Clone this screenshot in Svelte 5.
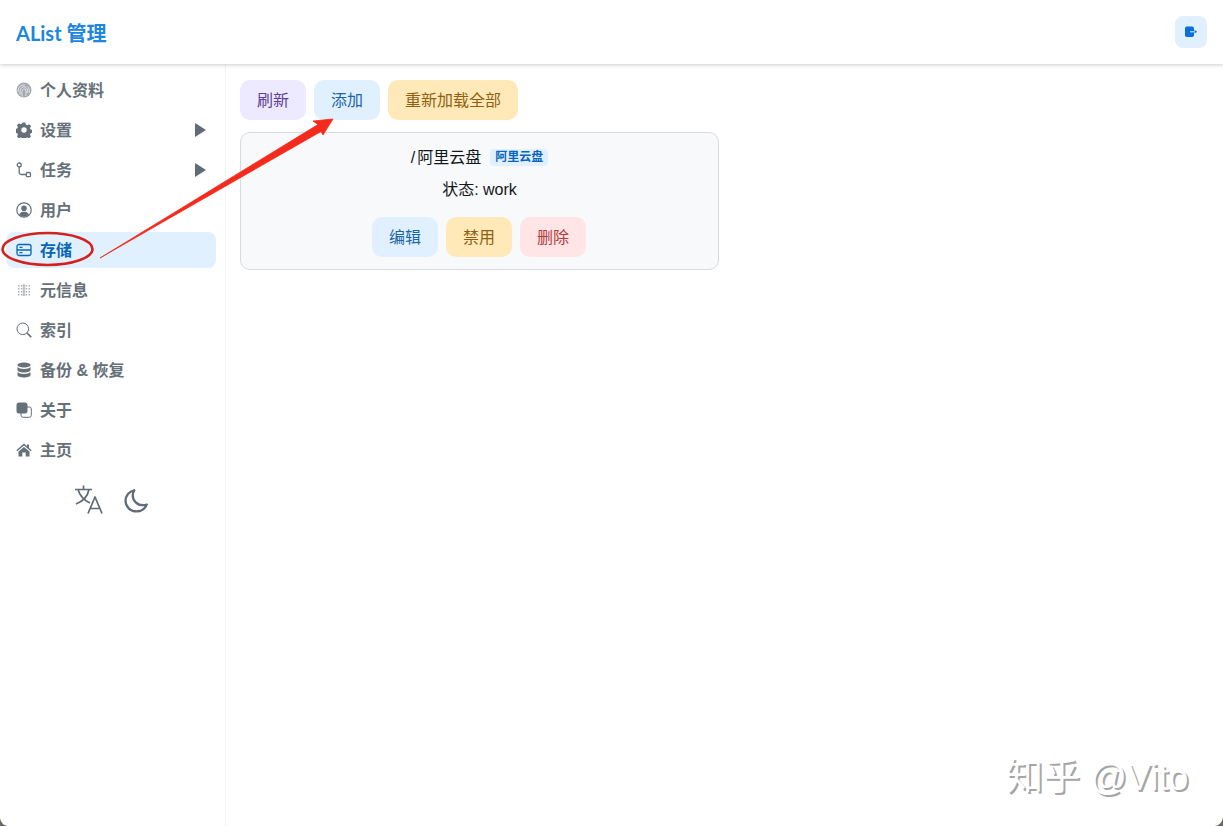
<script>
  const items = [
    { label: '个人资料', icon: 'finger' },
    { label: '设置', icon: 'gear', arrow: true },
    { label: '任务', icon: 'route', arrow: true },
    { label: '用户', icon: 'user' },
    { label: '存储', icon: 'storage', active: true },
    { label: '元信息', icon: 'meta' },
    { label: '索引', icon: 'search' },
    { label: '备份 & 恢复', icon: 'db' },
    { label: '关于', icon: 'copy' },
    { label: '主页', icon: 'home' }
  ];
</script>

<div class="page">
  <header class="top">
    <span class="brand">AList 管理</span>
    <button class="logout" aria-label="退出">
      <svg width="14" height="14" viewBox="0 0 14 14"><rect x="1" y="1.500" width="9" height="10.500" rx="1.800" fill="#0a6fd8"/><path d="M10.500 5v3.600L13.200 6.800z" fill="#0a6fd8"/><path d="M6 6.800h4.500" stroke="#e1f0ff" stroke-width="1"/></svg>
    </button>
  </header>

  <div class="body">
    <aside class="side">
      <nav class="nav">
        {#each items as it}
          <div class="item" class:active={it.active}>
            <svg class="ico" viewBox="0 0 16 16" width="16" height="16">
              {#if it.icon === 'finger'}
                <circle cx="8" cy="8" r="7.500" fill="currentColor" opacity=".6"/>
                <g fill="none" stroke="#fff" stroke-width=".8" opacity=".9">
                  <path d="M2 10c0-6 4-7.500 7-7M4.200 12.800c-1-5 1-8 3.800-8s3.800 2.500 3.300 6M6.500 14.500c-1-3-1-7 1.500-7.500s2.200 3.500 1.700 7M13.200 11c.3-3 0-5-1.500-6.500"/>
                </g>
              {:else if it.icon === 'gear'}
                <path fill="currentColor" fill-rule="evenodd" d="M6.600 0.500h2.800l.4 2 1.500.7 1.800-1 2 2-1.100 1.800.6 1.400 2 .5v2.800l-2 .5-.6 1.500 1 1.700-2 2-1.700-1-1.500.6-.4 2H6.600l-.5-2-1.400-.6-1.800 1-2-2 1-1.700-.6-1.500-2-.5V6.900l2-.5.6-1.400-1-1.800 2-2 1.800 1 1.400-.7zM8 5.300a2.700 2.700 0 1 0 0 5.400 2.700 2.700 0 0 0 0-5.400z"/>
              {:else if it.icon === 'route'}
                <g fill="none" stroke="currentColor" stroke-width="1.300"><circle cx="3.200" cy="3" r="2"/><rect x="10.300" y="10.500" width="4.200" height="4.200" rx="1.200"/><path d="M3.200 5v5.500a2 2 0 0 0 2 2h5"/></g>
              {:else if it.icon === 'user'}
                <circle cx="8" cy="8" r="7.200" fill="none" stroke="currentColor" stroke-width="1.200"/><circle cx="8" cy="6.300" r="2.800" fill="currentColor"/><path d="M3 12.700c1-2.500 3-3 5-3s4 .5 5 3a7 7 0 0 1-10 0z" fill="currentColor"/>
              {:else if it.icon === 'storage'}
                <g fill="none" stroke="currentColor" stroke-width="1.300"><rect x="1" y="2.500" width="14" height="11" rx="2"/><path d="M1 8h14M3.500 5.300h3M3.500 10.700h3"/></g>
              {:else if it.icon === 'meta'}
                <g fill="currentColor" opacity=".55"><path d="M2 3h1.500v1.500H2zM5 3h1.500v1.500H5zM9.500 3H11v1.500H9.500zM12.500 3H14v1.500h-1.500zM2 6h1.500v1.500H2zM5 6h1.500v1.500H5zM7.200 2h1.500v12H7.200zM9.500 6H11v1.500H9.500zM12.500 6H14v1.500h-1.500zM2 9h1.500v1.500H2zM5 9h1.500v1.500H5zM9.500 9H11v1.500H9.500zM12.500 9H14v1.500h-1.500zM2 12h1.500v1.500H2zM5 12h1.500v1.500H5zM9.500 12H11v1.500H9.500zM12.500 12H14v1.500h-1.500z"/></g>
              {:else if it.icon === 'search'}
                <g fill="none" stroke="currentColor"><circle cx="6.800" cy="6.800" r="5.800" stroke-width="1"/><path d="M11 11l4.200 4.200" stroke-width="1.700"/></g>
              {:else if it.icon === 'db'}
                <g fill="currentColor"><path d="M1.500 3c0-1.500 3-2.500 6.500-2.500S14.500 1.500 14.500 3 11.500 5.500 8 5.500 1.500 4.500 1.500 3z"/><path d="M1.500 5c1 1.300 3.500 1.900 6.500 1.900S13.500 6.300 14.500 5v3c0 1.500-3 2.500-6.500 2.500S1.500 9.500 1.500 8z" /><path d="M1.500 10c1 1.300 3.500 1.900 6.500 1.900s5.500-.6 6.500-1.900v3c0 1.500-3 2.500-6.500 2.500S1.500 14.500 1.500 13z"/></g>
              {:else if it.icon === 'copy'}
                <rect x="5" y="5" width="10.300" height="10.300" rx="2" fill="none" stroke="currentColor" stroke-width="1"/><rect x="0.500" y="0.500" width="11" height="11" rx="2.500" fill="currentColor"/>
              {:else}
                <path fill="currentColor" d="M8 1.500L.3 8.200l.9 1L8 3.400l6.800 5.800.9-1L13 6V2.500h-2v1.800zM2.500 9.600L8 4.900l5.500 4.700v5H9.700v-4H6.300v4H2.500z"/>
              {/if}
            </svg>
            <span class="lbl">{it.label}</span>
            {#if it.arrow}<i class="tri"></i>{/if}
          </div>
        {/each}
      </nav>
      <div class="tools">
        <svg width="32" height="32" viewBox="1 1 32 32" fill="none" stroke="#5f6b76" stroke-width="1.700" stroke-linejoin="round" aria-hidden="true">
          <path d="M3 6.500h17M11.500 2.500v4M17 6.500c-1.200 6.500-5.500 11.500-13 14.500M6 6.500c1.500 5.500 5.500 10.500 12 13.500"/>
          <path d="M16 30.500L23 14l7 16.500M18.200 25.500h9.600"/>
        </svg>
        <svg width="25" height="25" viewBox="0 0 28 28" fill="none" stroke="#5f6b76" stroke-width="2.500" stroke-linejoin="round" aria-hidden="true">
          <path d="M11.500 2.500C5.800 3.700 1.700 8.700 1.700 14.300c0 6.700 5.500 12 12.300 12 5.200 0 9.800-3.300 11.500-7.800-1 .5-2.600.8-4 .8-6.600 0-11.700-5-11.700-11 0-1.800.6-4.300 1.700-5.800z"/>
        </svg>
      </div>
    </aside>

    <main class="main">
      <div class="actions">
        <button class="btn purple">刷新</button>
        <button class="btn blue">添加</button>
        <button class="btn amber">重新加载全部</button>
      </div>
      <section class="card">
        <div class="title"><span><span class="slash">/</span>阿里云盘</span><span class="badge">阿里云盘</span></div>
        <div class="status">状态: work</div>
        <div class="card-actions">
          <button class="btn blue">编辑</button>
          <button class="btn amber">禁用</button>
          <button class="btn red">删除</button>
        </div>
      </section>
    </main>
  </div>

  <svg class="marks" width="1223" height="826" viewBox="0 0 1223 826" aria-hidden="true">
    <ellipse cx="47.500" cy="249" rx="45" ry="16" fill="none" stroke="#d4211f" stroke-width="2.600"/>
    <path d="M100 258L318 124.500 313 121 333 119 323 135 321 131.500z" fill="#f42a1c" stroke="#f42a1c" stroke-width=".8" stroke-linejoin="round"/>
    <path d="M0 818Q1 825 8 826L0 826z" fill="#6b6660"/>
    <path d="M1223 817Q1222 825 1215 826L1223 826z" fill="#6b6660"/>
  </svg>
  <div class="mark">知乎 <span class="vito">@Vito</span></div>
</div>

<style>
  :global(body) { margin: 0; background: #fff; }
  .page {
    position: relative;
    width: 1223px;
    height: 826px;
    overflow: hidden;
    font-family: "Liberation Sans", "Noto Sans CJK SC", sans-serif;
    font-size: 16px;
    color: #11181c;
    display: flex;
    flex-direction: column;
  }
  .top {
    height: 64px;
    flex: none;
    padding: 0 16px;
    display: flex;
    align-items: center;
    justify-content: space-between;
    box-shadow: 0 1px 4px rgba(0, 0, 0, .2);
    position: relative;
    z-index: 1;
    background: #fff;
  }
  .brand { font-family: Lato, "Noto Sans CJK SC", sans-serif; font-size: 20px; font-weight: 700; color: #1c86e0; }
  .logout {
    width: 32px; height: 32px; border: 0; padding: 0;
    border-radius: 8px; background: #e1f0ff;
    display: flex; align-items: center; justify-content: center;
  }
  .body { flex: 1; display: flex; min-height: 0; }
  .side { flex: none; width: 210px; border-right: 1px solid #f1f3f5; padding: 8px 9px 0 6px; }
  .nav { display: flex; flex-direction: column; gap: 4px; }
  .item {
    height: 36px;
    border-radius: 8px;
    padding: 0 10px;
    display: flex;
    align-items: center;
    color: #667079;
    font-weight: 700;
  }
  .item.active { background: #e1f0ff; color: #0a66b8; }
  .ico { flex: none; margin-right: 8px; }
  .lbl { flex: 1; padding-bottom: 2px; }
  .tri {
    width: 0; height: 0;
    border-left: 11px solid #5f6b76;
    border-top: 7px solid transparent;
    border-bottom: 7px solid transparent;
  }
  .tools { display: flex; justify-content: center; align-items: center; gap: 19px; margin-top: 16px; height: 32px; }
  .main { flex: 1; padding: 16px 14px; display: flex; flex-direction: column; align-items: flex-start; gap: 12px; }
  .actions, .card-actions { display: flex; gap: 8px; }
  .btn {
    height: 40px; border: 0; padding: 0 17px 2px;
    border-radius: 10px;
    font: inherit;
    white-space: nowrap;
  }
  .purple { background: #ede9fe; color: #5b3f96; }
  .blue { background: #e1f0ff; color: #1a66a8; }
  .amber { background: #ffe9b8; color: #915f12; }
  .red { background: #ffe5e5; color: #b33a3a; }
  .card {
    width: 479px; height: 138px;
    box-sizing: border-box;
    border: 1px solid #d7dbdf;
    border-radius: 10px;
    background: #f8f9fa;
    padding: 12px 0 0;
    display: flex;
    flex-direction: column;
    align-items: center;
  }
  .title { display: flex; align-items: center; gap: 9px; height: 24px; }
  .title > span:first-child { padding-bottom: 2px; }
  .slash { letter-spacing: 2px; }
  .badge {
    background: #e1f0ff; color: #0a66b8;
    font-size: 12px; font-weight: 700;
    padding: 0 5px; border-radius: 4px; height: 17px; line-height: 17px;
    width: 48px; text-align: center;
  }
  .status { margin-top: 9px; height: 24px; line-height: 24px; }
  .card-actions { margin-top: 15px; margin-left: -1px; }
  .marks { position: absolute; left: 0; top: 0; pointer-events: none; z-index: 2; }
  .mark {
    position: absolute; left: 1006px; top: 756px;
    font-size: 37px; line-height: 44px;
    color: #fff;
    white-space: nowrap;
    text-shadow: 2px 1.500px 0 #a6a6a6;
    z-index: 2;
  }
  .vito { font-size: 36px; }
</style>
